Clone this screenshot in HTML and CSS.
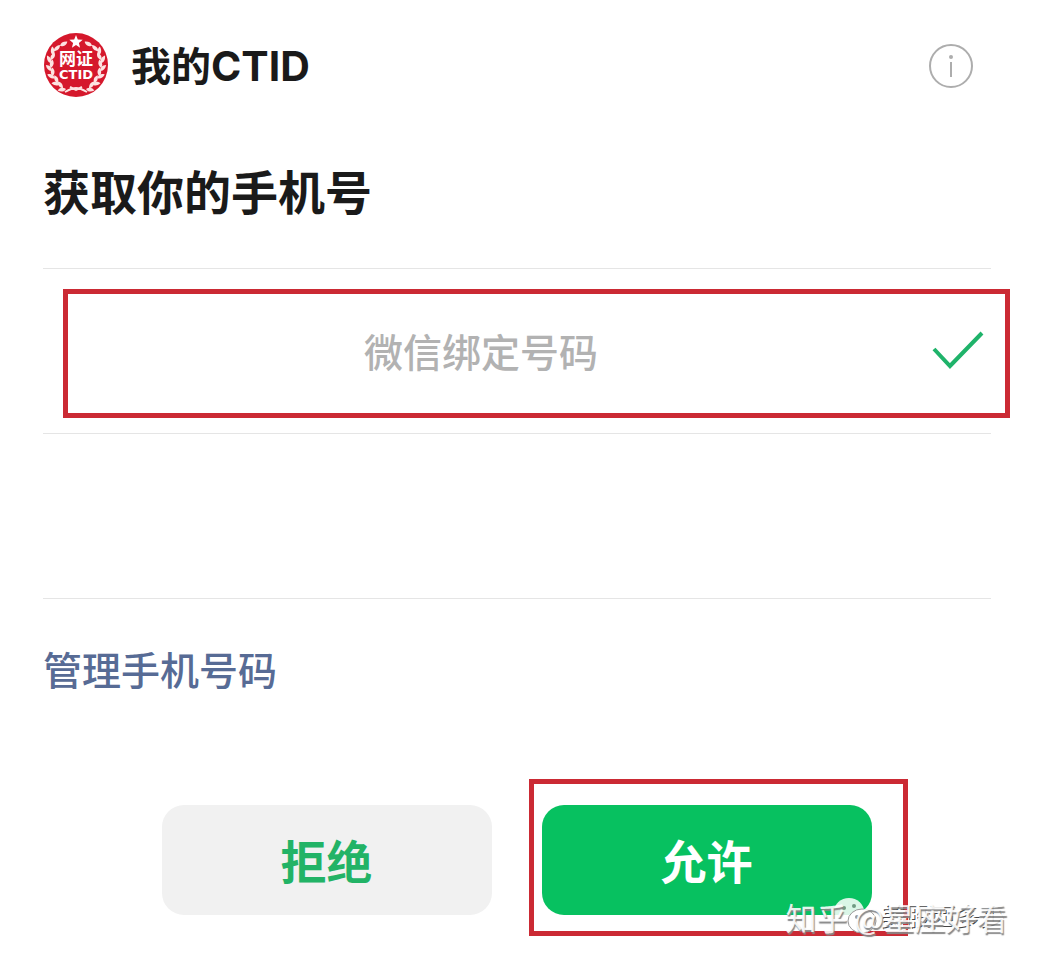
FILE: index.html
```html
<!DOCTYPE html>
<html lang="zh-CN">
<head>
  <meta charset="UTF-8" />
  <meta name="viewport" content="width=device-width, initial-scale=1" />
  <title>获取你的手机号</title>
  <link rel="stylesheet" href="styles.css">
</head>
<body>
  <main class="sheet">
    <header class="header">
      <svg class="logo" viewBox="0 0 66 66" aria-hidden="true">
        <defs>
          <path id="leaf" d="M0 0C1-3 4-4 8-3C6 1 3 1 0 0Z" />
          <g id="branch" fill="#fde3e2">
            <use href="#leaf" transform="translate(23 56) rotate(190)" />
            <use href="#leaf" transform="translate(17 51) rotate(205)" />
            <use href="#leaf" transform="translate(12 45) rotate(225)" />
            <use href="#leaf" transform="translate(9 38) rotate(244)" />
            <use href="#leaf" transform="translate(8 30) rotate(263)" />
            <use href="#leaf" transform="translate(10 22) rotate(285)" />
            <use href="#leaf" transform="translate(20 55) rotate(250)" />
            <use href="#leaf" transform="translate(15 50) rotate(265)" />
            <use href="#leaf" transform="translate(10 43) rotate(285)" />
            <use href="#leaf" transform="translate(8 35) rotate(300)" />
            <use href="#leaf" transform="translate(8 27) rotate(315)" />
            <use href="#leaf" transform="translate(11 18) rotate(335)" />
            <use href="#leaf" transform="translate(17 13) rotate(350)" />
          </g>
        </defs>
        <circle cx="33" cy="32" r="32" fill="#d5182c" />
        <use href="#branch" />
        <use href="#branch" transform="translate(66 0) scale(-1 1)" />
        <path d="M33 2L34.800 6.500L39.700 6.800L35.900 9.900L37.100 14.700L33 12.100L28.900 14.700L30.100 9.900L26.300 6.800L31.200 6.500Z" fill="#fff" />
        <path d="M22 59Q29 55 33 55Q37 55 44 59M27 54L33 57L39 54" fill="none" stroke="#fde3e2" stroke-width="2" />
        <text class="logo-cn" x="33" y="32">网证</text>
        <text class="logo-en" x="33" y="46">CTID</text>
      </svg>
      <span class="app-name">我的<span class="latin">CTID</span></span>
      <button class="info" type="button" aria-label="说明">
        <svg viewBox="0 0 46 46">
          <circle cx="23" cy="23" r="21" fill="none" stroke="#adadad" stroke-width="2" />
          <circle cx="23" cy="14" r="2" fill="#adadad" />
          <path d="M23 19V34" stroke="#adadad" stroke-width="2" />
        </svg>
      </button>
    </header>

    <h1 class="title">获取你的手机号</h1>

    <div class="phones">
      <button class="phone" type="button">
        <span>微信绑定号码</span>
        <svg class="check" viewBox="0 0 52 38" aria-hidden="true">
          <path d="M2 18L18 35L50 2" fill="none" stroke="#1fb36a" stroke-width="4" />
        </svg>
      </button>
      <div class="phone-empty"></div>
    </div>

    <a class="manage" href="#">管理手机号码</a>

    <div class="actions">
      <button class="btn reject" type="button">拒绝</button>
      <div class="allow-box">
        <button class="btn allow" type="button">允许</button>
        <div class="watermark">
          <svg class="wechat" viewBox="0 0 56 40" aria-hidden="true">
            <ellipse cx="17" cy="15" rx="15" ry="14" fill="#fff" fill-opacity=".85" />
            <circle cx="12" cy="11" r="2" fill="#6f9a82" />
            <circle cx="22" cy="9" r="2" fill="#6f9a82" />
            <ellipse cx="30" cy="24" rx="14" ry="12" fill="#fff" stroke="#999" />
            <circle cx="25" cy="20" r="2" fill="#999" />
          </svg>
          <span class="account">美股西多少</span>
          <span class="zhihu">知乎 @星座好看</span>
        </div>
      </div>
    </div>
  </main>
</body>
</html>
```
FILE: styles.css
```css
* { box-sizing: border-box; }
body { margin: 0; background: #fff; color: #1a1a1a; font-family: "Noto Sans CJK SC", sans-serif; }
button { border: none; padding: 0; background: none; font-family: inherit; cursor: pointer; }

.sheet { padding: 32px 46px 28px 43px; }
.header { display: flex; align-items: center; height: 68px; }
.logo { width: 66px; height: 66px; flex: none; }
.logo text { fill: #fff; font-weight: 700; text-anchor: middle; }
.logo-cn { font-size: 17px; font-family: "Noto Sans CJK SC", sans-serif; }
.logo-en { font-size: 13px; font-family: "DejaVu Sans", sans-serif; }
.app-name { margin-left: 22px; padding-bottom: 3px; font-size: 40px; line-height: 60px; font-weight: 700; }
.latin { font-family: Inter, sans-serif; font-size: 41px; }
.info { width: 46px; height: 46px; margin-left: auto; margin-right: 17px; }
.info svg { display: block; }

.title { margin: 56px 0 44px; font-size: 47px; line-height: 68px; font-weight: 700; }

.phones { border-top: 1px solid #e5e5e5; border-bottom: 1px solid #e5e5e5; }
.phone { display: flex; align-items: center; justify-content: flex-end; width: calc(100% - 1px); height: 129px; margin: 20px 0 15px 20px; padding: 0 21px 7px 0; border: 5px solid #cb2a34; color: #b2b2b2; font-size: 39px; font-weight: 500; }
.check { width: 52px; height: 38px; margin-left: 334px; }
.phone-empty { height: 165px; border-top: 1px solid #e5e5e5; }

.manage { display: block; margin-top: 39px; color: #576b95; font-size: 39px; line-height: 60px; font-weight: 500; text-decoration: none; }

.actions { display: flex; justify-content: center; align-items: flex-end; gap: 37px; margin-top: 81px; padding-left: 35px; }
.btn { width: 330px; height: 110px; padding-bottom: 3px; border-radius: 22px; font-size: 46px; font-weight: 700; }
.reject { margin-bottom: 21px; background: #f1f1f1; color: #22b366; }
.allow { background: #07c160; color: #fff; }
.allow-box { position: relative; padding: 21px 31px 16px 8px; border: 5px solid #cb2a34; }
.allow-box .allow { display: block; }

/* overlaid marks on the lower right corner */
.watermark { position: absolute; left: 252px; bottom: -9px; width: 232px; height: 48px; pointer-events: none; }
.wechat { position: absolute; left: 46px; top: 5px; width: 56px; height: 40px; }
.account { position: absolute; left: 97px; top: 7px; color: #fff; font-size: 25px; line-height: 36px; white-space: nowrap; text-shadow: -1px -1px 0 #444; }
.zhihu { position: absolute; left: 0; top: 3px; color: rgba(255,255,255,.9); font-size: 31px; line-height: 44px; white-space: nowrap; text-shadow: 1px 2px 1px #888; }
```
